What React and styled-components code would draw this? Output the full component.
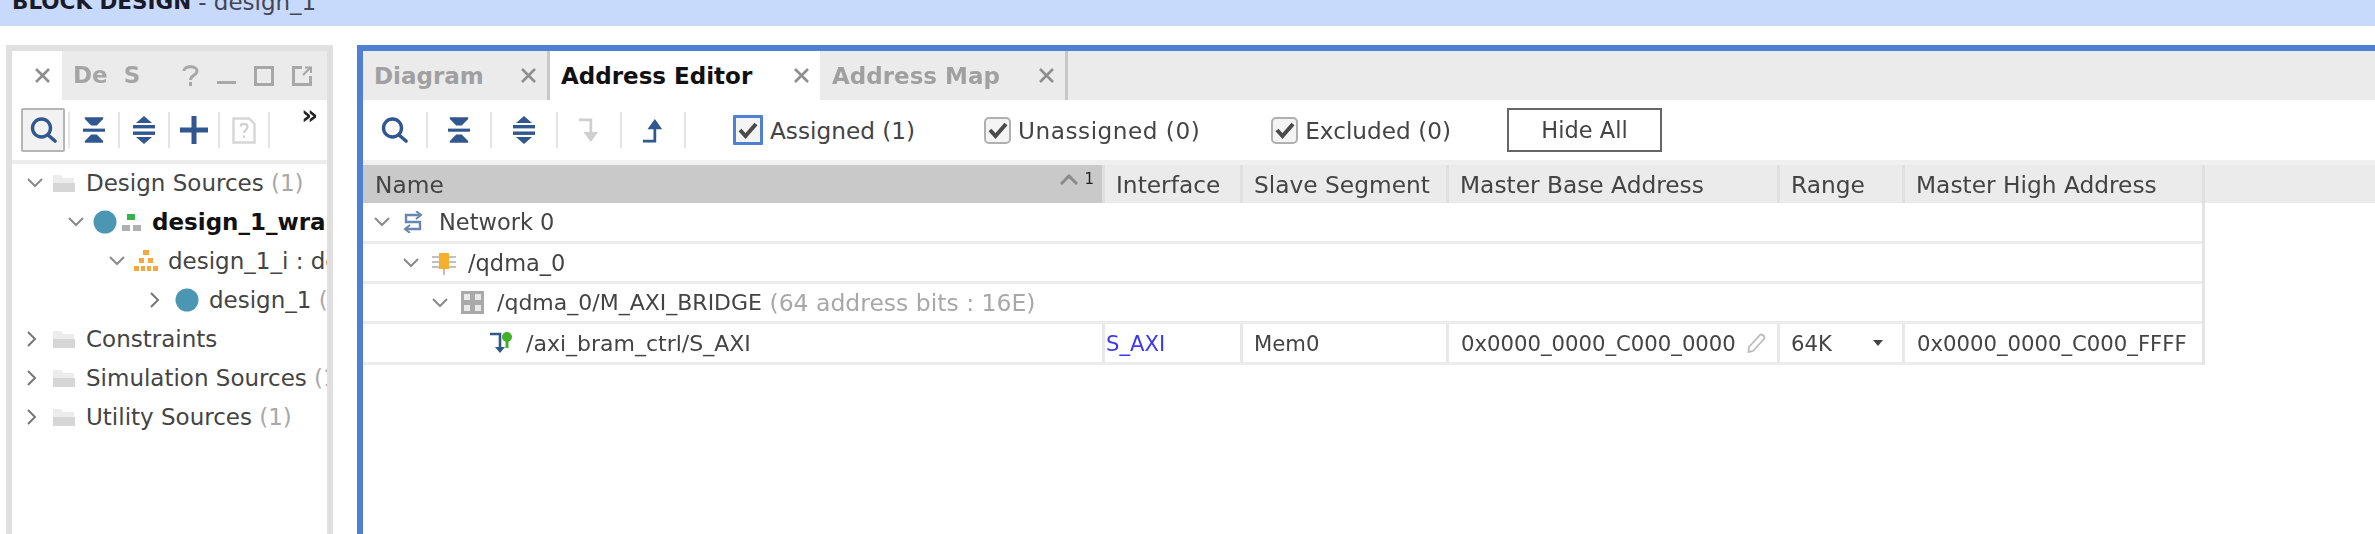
import React from 'react'
import styled, { createGlobalStyle } from 'styled-components'

const GlobalStyle = createGlobalStyle`
  html, body {
    margin: 0;
    padding: 0;
    background: #fff;
  }
  body {
    font-family: "DejaVu Sans", sans-serif;
    font-size: 23px;
    color: #444;
  }
`

const Page = styled.div`
  width: 2375px;
  height: 534px;
  overflow: hidden;
  display: flex;
  flex-direction: column;
  filter: blur(0.6px);
`

const TitleBar = styled.div`
  height: 26px;
  flex: none;
  background: #c8dafc;
  display: flex;
  align-items: flex-end;
  padding: 0 0 12px 12px;
  box-sizing: border-box;
  overflow: hidden;
  line-height: 24px;
  white-space: nowrap;
`

const TitleStrong = styled.span`
  font-size: 21.5px;
  font-weight: 700;
  color: #1a1a2a;
`

const TitleRest = styled.span`
  color: #445;
  margin-left: 7px;
`

const Workspace = styled.div`
  flex: 1;
  min-height: 0;
  display: flex;
  gap: 24px;
  padding: 19px 0 0 6px;
`

const SidePanel = styled.div`
  width: 327px;
  flex: none;
  box-sizing: border-box;
  border: 6px solid #e0e0e0;
  border-bottom: none;
  display: flex;
  flex-direction: column;
`

const MainPanel = styled.div`
  flex: 1;
  min-width: 0;
  box-sizing: border-box;
  border: 6px solid #4f80d4;
  border-width: 6px 0 0 6px;
  display: flex;
  flex-direction: column;
`

const TabBar = styled.div`
  height: 49px;
  flex: none;
  background: #ebebeb;
  display: flex;
  align-items: stretch;
`

const SideTab = styled.div`
  width: 50px;
  background: #fff;
  display: flex;
  align-items: center;
  padding-left: 23px;
  box-sizing: border-box;
`

const SideTabLabel = styled.span`
  font-weight: 700;
  color: #a5a5a5;
  line-height: 49px;
  margin-left: ${p => p.$left}px;
`

const WindowButtons = styled.div`
  display: flex;
  align-items: center;
  gap: 18px;
  margin-left: 42px;
`

const Tab = styled.div`
  width: ${p => p.$width}px;
  flex: none;
  box-sizing: border-box;
  display: flex;
  align-items: center;
  justify-content: space-between;
  padding: 0 11px 0 ${p => p.$pad}px;
  font-weight: 700;
  background: ${p => (p.$active ? '#fff' : 'transparent')};
  color: ${p => (p.$active ? '#111' : '#a0a0a0')};
  border-right: ${p => (p.$divider ? '3px solid #c8c8c8' : 'none')};
`

const Toolbar = styled.div`
  height: 60px;
  flex: none;
  background: #fff;
  display: flex;
  align-items: center;
`

const SideToolbar = styled(Toolbar)`
  position: relative;
  padding-left: 9px;
  border-bottom: 4px solid #ececec;
  height: 64px;
  box-sizing: border-box;
`

const ToolSlot = styled.div`
  width: ${p => p.$width || 50}px;
  height: 44px;
  flex: none;
  box-sizing: border-box;
  display: flex;
  align-items: center;
  justify-content: center;
  background: ${p => (p.$pressed ? '#f2f2f2' : 'transparent')};
  border: ${p => (p.$pressed ? '2px solid #b5b5b5' : 'none')};
  border-radius: 2px;
`

const ToolSep = styled.div`
  width: 2px;
  height: 36px;
  flex: none;
  margin-left: ${p => p.$gap || 0}px;
  background: #e4e4e4;
`

const MoreGlyph = styled.span`
  position: absolute;
  right: 9px;
  top: 0;
  font-size: 26px;
  font-weight: 700;
  color: #222;
`

const FilterGroup = styled.div`
  display: flex;
  align-items: center;
  gap: 7px;
  margin-left: ${p => p.$left}px;
  white-space: nowrap;
  font-size: 23.2px;
`

const FilterLabel = styled.span`
  letter-spacing: ${p => p.$spacing || 0}px;
`

const CheckBoxMark = styled.div`
  width: ${p => (p.$focused ? 30 : 27)}px;
  height: ${p => (p.$focused ? 30 : 27)}px;
  box-sizing: border-box;
  border: ${p => (p.$focused ? '3px solid #4f80d4' : '2px solid #b0b0b0')};
  border-radius: ${p => (p.$focused ? 1 : 5)}px;
  background: #f4f4f4;
  display: flex;
  align-items: center;
  justify-content: center;
`

const HideButton = styled.button`
  width: 155px;
  height: 44px;
  margin-left: 56px;
  background: #fff;
  border: 2px solid #666;
  border-radius: 0;
  font: inherit;
  font-size: 22.5px;
  color: #444;
`

const TreeList = styled.div`
  flex: 1;
  min-height: 0;
  overflow: hidden;
  background: #fff;
`

const TreeRow = styled.div`
  height: 39px;
  box-sizing: border-box;
  padding-bottom: 2px;
  display: flex;
  align-items: center;
  white-space: nowrap;
  padding-left: ${p => 14 + p.$depth * 41}px;
`

const Slot = styled.span`
  width: ${p => p.$width}px;
  flex: none;
  display: flex;
  align-items: center;
  gap: 5px;
`

const RowText = styled.span`
  flex: none;
  font-size: ${p => p.$size || 'inherit'};
  font-weight: ${p => (p.$bold ? 700 : 400)};
  color: ${p => (p.$bold ? '#111' : '#444')};
`

const Dim = styled.span`
  flex: none;
  font-size: ${p => p.$size || 'inherit'};
  color: #a8a8a8;
`

const ToolbarRule = styled.div`
  height: 5px;
  flex: none;
  background: #f0f0f0;
`

const HeaderRow = styled.div`
  display: flex;
  height: 38px;
  flex: none;
  background: #ebebeb;
  font-size: 23.3px;
`

const HeaderCell = styled.div`
  width: ${p => p.$width}px;
  flex: none;
  box-sizing: border-box;
  display: flex;
  align-items: center;
  justify-content: space-between;
  padding: 0 8px 0 ${p => p.$pad}px;
  background: ${p => (p.$sorted ? '#c9c9c9' : 'transparent')};
  border-right: 3px solid #e0e0e0;
  white-space: nowrap;
`

const SortMark = styled.span`
  display: flex;
  align-items: center;
  gap: 6px;
  font-size: 15px;
  margin-bottom: 10px;
  color: #222;
`

const Grid = styled.div`
  width: 1842px;
  box-sizing: border-box;
  border-right: 3px solid #e4e4e4;
  font-size: 22.5px;
`

const Row = styled.div`
  display: flex;
  height: ${p => p.$height || 40}px;
  box-sizing: border-box;
  border-bottom: 3px solid #ececec;
  align-items: stretch;
  white-space: nowrap;
`

const NameCell = styled.div`
  flex: 1;
  display: flex;
  align-items: center;
  padding-left: ${p => 10 + p.$depth * 29}px;
  border-right: ${p => (p.$divided ? '3px solid #e8e8e8' : 'none')};
`

const Cell = styled.div`
  width: ${p => p.$width}px;
  flex: none;
  box-sizing: border-box;
  display: flex;
  align-items: center;
  justify-content: space-between;
  padding: 0 ${p => p.$right || 0}px 0 ${p => p.$pad}px;
  border-right: ${p => (p.$last ? 'none' : '3px solid #e8e8e8')};
  font-size: 21.2px;
  color: ${p => p.$color || '#444'};
`

const ChevronDown = () => (
  <svg width="18" height="12" viewBox="0 0 18 12">
    <polyline points="2,2 9,9 16,2" fill="none" stroke="#8a8a8a" strokeWidth="2" />
  </svg>
)

const ChevronRight = () => (
  <svg width="12" height="18" viewBox="0 0 12 18">
    <polyline points="2,2 9,9 2,16" fill="none" stroke="#777" strokeWidth="2" />
  </svg>
)

const Close = ({ color = '#8e8e8e' }) => (
  <svg width="15" height="15" viewBox="0 0 15 15">
    <path d="M1 1 L14 14 M14 1 L1 14" stroke={color} strokeWidth="2.6" />
  </svg>
)

const Folder = () => (
  <svg width="24" height="20" viewBox="0 0 24 20">
    <path d="M1 2 h8 l2 3 h11 v14 h-21 z" fill="#ececec" />
    <rect x="1" y="10" width="22" height="9" fill="#d6d6d6" />
  </svg>
)

const Disc = () => (
  <svg width="24" height="24" viewBox="0 0 24 24">
    <circle cx="12" cy="12" r="11.5" fill="#4b97b3" />
  </svg>
)

const TopIcon = () => (
  <svg width="20" height="20" viewBox="0 0 20 20">
    <rect x="5" y="2" width="8" height="6" fill="#37b24d" />
    <rect x="0" y="13" width="8" height="6" fill="#b0b0b0" />
    <rect x="11" y="13" width="8" height="6" fill="#b0b0b0" />
  </svg>
)

const Pyramid = () => (
  <svg width="24" height="21" viewBox="0 0 24 21">
    <g fill="#f7a73c">
      <rect x="9" y="0" width="6" height="5" />
      <rect x="5" y="8" width="5" height="5" />
      <rect x="14" y="8" width="5" height="5" />
      <rect x="0" y="16" width="5" height="5" />
      <rect x="7" y="16" width="4" height="5" />
      <rect x="13" y="16" width="4" height="5" />
      <rect x="19" y="16" width="5" height="5" />
    </g>
  </svg>
)

const SearchIcon = () => (
  <svg width="27" height="26" viewBox="0 0 27 26">
    <circle cx="11.5" cy="11" r="9" fill="none" stroke="#30578f" strokeWidth="3.4" />
    <path d="M18 18 L25 24" stroke="#30578f" strokeWidth="3.6" strokeLinecap="round" />
  </svg>
)

const CollapseIcon = () => (
  <svg width="22" height="28" viewBox="0 0 24 28">
    <g fill="#30578f">
      <path d="M2 0 H22 V2 L15 9 H9 L2 2 Z" />
      <rect x="0" y="12.5" width="24" height="3.4" />
      <path d="M9 19 H15 L22 26 V28 H2 V26 Z" />
    </g>
  </svg>
)

const ExpandIcon = () => (
  <svg width="24" height="28" viewBox="0 0 24 28">
    <g fill="#30578f">
      <path d="M12 0 L20 7 H4 Z" />
      <rect x="1" y="9" width="22" height="3.4" />
      <rect x="1" y="15.5" width="22" height="3.4" />
      <path d="M4 21 H20 L12 28 Z" />
    </g>
  </svg>
)

const PlusIcon = () => (
  <svg width="28" height="28" viewBox="0 0 28 28">
    <path d="M14 0 V28 M0 14 H28" stroke="#30578f" strokeWidth="5" />
  </svg>
)

const HelpDocIcon = () => (
  <svg width="24" height="27" viewBox="0 0 24 27">
    <path d="M1.5 1.5 H17 L22.5 7 V25.5 H1.5 Z" fill="none" stroke="#d6d6d6" strokeWidth="2.4" />
    <path d="M8.5 9.5 C9 6 15.5 6 15.5 10 C15.5 13 12 13 12 16 M12 18.5 V21" fill="none" stroke="#d0d0d0" strokeWidth="2.2" />
  </svg>
)

const ArrowDownIcon = () => (
  <svg width="22" height="27" viewBox="0 0 24 27">
    <path d="M1 2 H14 V16" fill="none" stroke="#cfcfcf" strokeWidth="3" />
    <path d="M6 15 H22 L14 26 Z" fill="#cfcfcf" />
  </svg>
)

const ArrowUpIcon = () => (
  <svg width="22" height="27" viewBox="0 0 24 27">
    <path d="M1 25 H14 V11" fill="none" stroke="#30578f" strokeWidth="3" />
    <path d="M6 12 H22 L14 1 Z" fill="#30578f" />
  </svg>
)

const HelpMark = () => (
  <svg width="17" height="21" viewBox="0 0 17 21">
    <path d="M2 6 C2 0.5 15 0 15 6 C15 10.5 8.5 10 8.5 15 M8.5 17 V21" fill="none" stroke="#a8a8a8" strokeWidth="3" />
  </svg>
)

const MinimizeMark = () => (
  <svg width="19" height="20" viewBox="0 0 19 20">
    <rect x="0" y="15" width="19" height="3" fill="#a8a8a8" />
  </svg>
)

const MaximizeMark = () => (
  <svg width="20" height="20" viewBox="0 0 20 20">
    <rect x="1.5" y="1.5" width="17" height="17" fill="none" stroke="#a8a8a8" strokeWidth="3" />
  </svg>
)

const FloatMark = () => (
  <svg width="20" height="20" viewBox="0 0 20 20">
    <path d="M10 1.5 H1.5 V18.5 H18.5 V10" fill="none" stroke="#a8a8a8" strokeWidth="3" />
    <path d="M11 9 L18 2 M13 1.5 H19 V7" fill="none" stroke="#a8a8a8" strokeWidth="2" />
  </svg>
)

const NetworkIcon = () => (
  <svg width="20" height="22" viewBox="0 0 20 22">
    <path d="M18 4 H3 V11 H17 V18 H2" fill="none" stroke="#6a86b0" strokeWidth="2.4" />
    <path d="M13 0 L18 4 L13 8 M7 14 L2 18 L7 22" fill="none" stroke="#6a86b0" strokeWidth="2" />
  </svg>
)

const CoreIcon = () => (
  <svg width="24" height="24" viewBox="0 0 24 24">
    <path d="M0 6 H24 M0 11 H24 M0 16 H24 M12 18 V24" stroke="#c0c0c0" strokeWidth="2" />
    <rect x="7" y="2" width="10" height="16" fill="#f7b02c" />
  </svg>
)

const BridgeIcon = () => (
  <svg width="23" height="23" viewBox="0 0 23 23">
    <rect x="0" y="0" width="23" height="23" fill="#a9a9a9" />
    <path d="M3 3 H9 V9 H3 Z M14 3 H20 V9 H14 Z M3 14 H9 V20 H3 Z M14 14 H20 V20 H14 Z" fill="#e9e9e9" />
  </svg>
)

const SlaveIcon = () => (
  <svg width="24" height="22" viewBox="0 0 24 22">
    <path d="M0 2 H10 V18" fill="none" stroke="#30578f" strokeWidth="2.6" />
    <path d="M5 15 H15 L10 21 Z" fill="#30578f" />
    <circle cx="17" cy="5" r="5" fill="#43b02a" />
    <rect x="15.5" y="9" width="3" height="7" fill="#43b02a" />
  </svg>
)

const PencilIcon = () => (
  <svg width="20" height="20" viewBox="0 0 20 20">
    <path d="M2 14 L13 2 C15 0.5 18.5 3.5 17 6 L6 18 L1.5 19 Z" fill="none" stroke="#bdbdbd" strokeWidth="1.8" />
  </svg>
)

const DropArrow = () => (
  <svg width="10" height="6" viewBox="0 0 10 6">
    <path d="M0 0 H10 L5 6 Z" fill="#444" />
  </svg>
)

const CheckIcon = () => (
  <svg width="20" height="18" viewBox="0 0 20 18">
    <path d="M2 9 L7.5 15 L18 3" fill="none" stroke="#4a4a4a" strokeWidth="4" />
  </svg>
)

const SortUp = () => (
  <svg width="18" height="11" viewBox="0 0 18 11">
    <polyline points="1,10 9,2 17,10" fill="none" stroke="#8a8a8a" strokeWidth="3" />
  </svg>
)

const treeItems = [
  { depth: 0, open: true, icons: [<Folder key="f" />], label: 'Design Sources', count: '\u00a0(1)' },
  { depth: 1, open: true, icons: [<Disc key="d" />, <TopIcon key="t" />], label: 'design_1_wrapper', bold: true, count: '\u00a0(design_1_wrapper.v)', iconWidth: 59 },
  { depth: 2, open: true, icons: [<Pyramid key="p" />], label: 'design_1_i : design_1', count: '\u00a0(design_1.bd)' },
  { depth: 3, open: false, icons: [<Disc key="d" />], label: 'design_1', count: '\u00a0(design_1.bd)' },
  { depth: 0, open: false, icons: [<Folder key="f" />], label: 'Constraints', count: '' },
  { depth: 0, open: false, icons: [<Folder key="f" />], label: 'Simulation Sources', count: '\u00a0(1)' },
  { depth: 0, open: false, icons: [<Folder key="f" />], label: 'Utility Sources', count: '\u00a0(1)' },
]

const columns = [
  { title: 'Name', width: 742, pad: 12 },
  { title: 'Interface', width: 138, pad: 11 },
  { title: 'Slave Segment', width: 206, pad: 11 },
  { title: 'Master Base Address', width: 331, pad: 11 },
  { title: 'Range', width: 125, pad: 11 },
  { title: 'Master High Address', width: 300, pad: 11 },
]

const App = () => {
  return (
    <Page>
      <GlobalStyle />
      <TitleBar>
        <TitleStrong>BLOCK DESIGN</TitleStrong>
        <TitleRest>- design_1</TitleRest>
      </TitleBar>
      <Workspace>
        <SidePanel>
          <TabBar>
            <SideTab><Close /></SideTab>
            <SideTabLabel $left={11}>De</SideTabLabel>
            <SideTabLabel $left={16}>S</SideTabLabel>
            <WindowButtons>
              <HelpMark />
              <MinimizeMark />
              <MaximizeMark />
              <FloatMark />
            </WindowButtons>
          </TabBar>
          <SideToolbar>
            <ToolSlot $pressed $width={44}><SearchIcon /></ToolSlot>
            <ToolSep $gap={3} />
            <ToolSlot $width={48}><CollapseIcon /></ToolSlot>
            <ToolSep />
            <ToolSlot $width={48}><ExpandIcon /></ToolSlot>
            <ToolSep />
            <ToolSlot $width={48}><PlusIcon /></ToolSlot>
            <ToolSep />
            <ToolSlot $width={48}><HelpDocIcon /></ToolSlot>
            <ToolSep />
            <MoreGlyph>»</MoreGlyph>
          </SideToolbar>
          <TreeList>
            {treeItems.map(item => (
              <TreeRow key={item.label} $depth={item.depth}>
                <Slot $width={26}>{item.open ? <ChevronDown /> : <ChevronRight />}</Slot>
                <Slot $width={item.iconWidth || 34}>{item.icons}</Slot>
                <RowText $bold={item.bold}>{item.label}</RowText>
                <Dim>{item.count}</Dim>
              </TreeRow>
            ))}
          </TreeList>
        </SidePanel>
        <MainPanel>
          <TabBar>
            <Tab $width={187} $pad={11} $divider>Diagram<Close /></Tab>
            <Tab $width={270} $pad={11} $active>Address Editor<Close /></Tab>
            <Tab $width={248} $pad={12} $divider>Address Map<Close /></Tab>
          </TabBar>
          <Toolbar>
            <ToolSlot $width={63}><SearchIcon /></ToolSlot>
            <ToolSep />
            <ToolSlot $width={62}><CollapseIcon /></ToolSlot>
            <ToolSep />
            <ToolSlot $width={64}><ExpandIcon /></ToolSlot>
            <ToolSep />
            <ToolSlot $width={62}><ArrowDownIcon /></ToolSlot>
            <ToolSep />
            <ToolSlot $width={62}><ArrowUpIcon /></ToolSlot>
            <ToolSep />
            <FilterGroup $left={47}>
              <CheckBoxMark $focused><CheckIcon /></CheckBoxMark>
              <FilterLabel>Assigned (1)</FilterLabel>
            </FilterGroup>
            <FilterGroup $left={69}>
              <CheckBoxMark><CheckIcon /></CheckBoxMark>
              <FilterLabel $spacing={0.5}>Unassigned (0)</FilterLabel>
            </FilterGroup>
            <FilterGroup $left={71}>
              <CheckBoxMark><CheckIcon /></CheckBoxMark>
              <FilterLabel>Excluded (0)</FilterLabel>
            </FilterGroup>
            <HideButton>Hide All</HideButton>
          </Toolbar>
          <ToolbarRule />
          <HeaderRow>
            {columns.map((col, i) => (
              <HeaderCell key={col.title} $width={col.width} $sorted={i === 0} $pad={col.pad}>
                {col.title}
                {i === 0 && <SortMark><SortUp />1</SortMark>}
              </HeaderCell>
            ))}
          </HeaderRow>
          <Grid>
            <Row $height={41}>
              <NameCell $depth={0}>
                <Slot $width={30}><ChevronDown /></Slot>
                <Slot $width={36}><NetworkIcon /></Slot>
                <RowText>Network 0</RowText>
              </NameCell>
            </Row>
            <Row>
              <NameCell $depth={1}>
                <Slot $width={30}><ChevronDown /></Slot>
                <Slot $width={36}><CoreIcon /></Slot>
                <RowText>/qdma_0</RowText>
              </NameCell>
            </Row>
            <Row>
              <NameCell $depth={2}>
                <Slot $width={30}><ChevronDown /></Slot>
                <Slot $width={36}><BridgeIcon /></Slot>
                <RowText $size="22px">/qdma_0/M_AXI_BRIDGE</RowText>
                <Dim $size="23.5px">&nbsp;(64 address bits : 16E)</Dim>
              </NameCell>
            </Row>
            <Row $height={41}>
              <NameCell $depth={3} $divided>
                <Slot $width={30} />
                <Slot $width={36}><SlaveIcon /></Slot>
                <RowText $size="22px">/axi_bram_ctrl/S_AXI</RowText>
              </NameCell>
              <Cell $width={138} $pad={1} $color="#3a3af0"><span>S_AXI</span></Cell>
              <Cell $width={206} $pad={11}><span>Mem0</span></Cell>
              <Cell $width={331} $pad={12} $right={10}><span>0x0000_0000_C000_0000</span><PencilIcon /></Cell>
              <Cell $width={125} $pad={11} $right={19}><span>64K</span><DropArrow /></Cell>
              <Cell $width={297} $pad={12} $last><span>0x0000_0000_C000_FFFF</span></Cell>
            </Row>
          </Grid>
        </MainPanel>
      </Workspace>
    </Page>
  )
}

export default App
